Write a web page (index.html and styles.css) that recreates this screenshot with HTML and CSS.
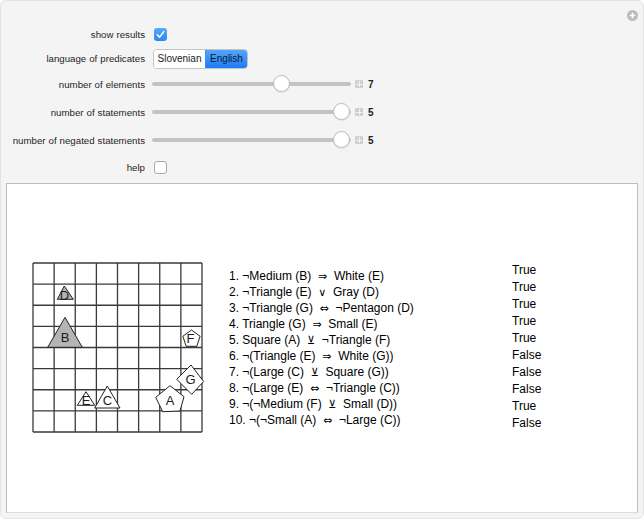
FILE: index.html
```html
<!DOCTYPE html>
<html>
<head>
<meta charset="utf-8">
<link rel="stylesheet" href="styles.css">
</head>
<body>
<div class="panel">
  <div class="add-btn"><svg width="11" height="11" viewBox="0 0 11 11"><circle cx="5.5" cy="5.5" r="5.5" fill="#bdbdbd"/><path d="M5.5 2.8v5.4M2.8 5.5h5.4" stroke="#fff" stroke-width="1.6"/></svg></div>
  <div class="controls">
    <div class="row r1">
      <div class="label">show results</div>
      <div class="check on"><svg width="13" height="13" viewBox="0 0 13 13"><path d="M3.3 6.8l2.2 2.4 4.3-5.6" fill="none" stroke="#fff" stroke-width="1.4" stroke-linecap="round" stroke-linejoin="round"/></svg></div>
    </div>
    <div class="row r2">
      <div class="label">language of predicates</div>
      <div class="seg">
        <div class="seg-item">Slovenian</div>
        <div class="seg-item active">English</div>
      </div>
    </div>
    <div class="row r3">
      <div class="label">number of elements</div>
      <div class="slider"><div class="track"></div><div class="thumb" style="left:121px"></div></div>
      <div class="plus"></div>
      <div class="val">7</div>
    </div>
    <div class="row r4">
      <div class="label">number of statements</div>
      <div class="slider"><div class="track"></div><div class="thumb" style="left:181px"></div></div>
      <div class="plus"></div>
      <div class="val">5</div>
    </div>
    <div class="row r5">
      <div class="label">number of negated statements</div>
      <div class="slider"><div class="track"></div><div class="thumb" style="left:181px"></div></div>
      <div class="plus"></div>
      <div class="val">5</div>
    </div>
    <div class="row r6">
      <div class="label">help</div>
      <div class="check"></div>
    </div>
  </div>
  <div class="output">
    <svg class="board" width="182" height="182" viewBox="0 0 182 182">
      <g stroke="#3a3a3a" stroke-width="1.3" fill="none">
        <path d="M5 5V174M26.125 5V174M47.25 5V174M68.375 5V174M89.5 5V174M110.625 5V174M131.75 5V174M152.875 5V174M174 5V174"/>
        <path d="M5 5H174M5 26.125H174M5 47.25H174M5 68.375H174M5 89.5H174M5 110.625H174M5 131.75H174M5 152.875H174M5 174H174"/>
      </g>
      <g stroke="#222" stroke-width="1" stroke-linejoin="round">
        <polygon points="36.3,28 29.3,41.3 45.3,41.3" fill="#b4b4b4"/>
        <polygon points="37,59.3 19.7,89.3 54.3,89.3" fill="#b4b4b4"/>
        <polygon points="163.5,72 172.1,78.2 168.8,88.3 158.2,88.3 154.9,78.2" fill="#fff"/>
        <polygon points="163,107 175.6,123.5 163.7,136.3 148.7,121.3" fill="#fff"/>
        <polygon points="142,127.7 156,138.7 152,153 134.7,153.7 127.7,139.3" fill="#fff"/>
        <polygon points="79.3,128 66.7,150 92,150" fill="#fff"/>
        <polygon points="58,133.7 49.3,147.3 66.7,147.3" fill="#fff"/>
      </g>
      <g class="lbl" text-anchor="middle">
        <text x="36.5" y="41.5">D</text>
        <text x="37" y="83.8">B</text>
        <text x="162.5" y="85">F</text>
        <text x="162.5" y="126">G</text>
        <text x="142" y="146.5">A</text>
        <text x="79.5" y="147.2">C</text>
        <text x="58" y="147.2">E</text>
      </g>
    </svg>
    <div class="statements">
      <div class="st">1. ¬Medium (B)  <span class="op">⇒</span>  White (E)</div>
      <div class="st">2. ¬Triangle (E)  <span class="op">∨</span>  Gray (D)</div>
      <div class="st">3. ¬Triangle (G)  <span class="op">⇔</span>  ¬Pentagon (D)</div>
      <div class="st">4. Triangle (G)  <span class="op">⇒</span>  Small (E)</div>
      <div class="st">5. Square (A)  <span class="op">⊻</span>  ¬Triangle (F)</div>
      <div class="st">6. ¬(Triangle (E)  <span class="op">⇒</span>  White (G))</div>
      <div class="st">7. ¬(Large (C)  <span class="op">⊻</span>  Square (G))</div>
      <div class="st">8. ¬(Large (E)  <span class="op">⇔</span>  ¬Triangle (C))</div>
      <div class="st">9. ¬(¬Medium (F)  <span class="op">⊻</span>  Small (D))</div>
      <div class="st">10. ¬(¬Small (A)  <span class="op">⇔</span>  ¬Large (C))</div>
    </div>
    <div class="values">
      <div>True</div>
      <div>True</div>
      <div>True</div>
      <div>True</div>
      <div>True</div>
      <div>False</div>
      <div>False</div>
      <div>False</div>
      <div>True</div>
      <div>False</div>
    </div>
  </div>
</div>
</body>
</html>
```
FILE: styles.css
```css
html, body {
  margin: 0;
  padding: 0;
  background: #ffffff;
}
.panel {
  position: relative;
  box-sizing: border-box;
  width: 644px;
  height: 519px;
  background: #f4f4f4;
  border: 1px solid #e3e3e3;
  border-radius: 6px;
  font-family: "Liberation Sans", Arial, sans-serif;
}
.add-btn {
  position: absolute;
  top: 9px;
  right: 5px;
  width: 11px;
  height: 11px;
}
.add-btn svg { display: block; }
.controls {
  padding-top: 19px;
  display: flex;
  flex-direction: column;
}
.row {
  display: flex;
  align-items: center;
}
.r1 { height: 28px; }
.r2 { height: 21px; }
.r3 { height: 30px; }
.r4 { height: 26px; }
.r5 { height: 30px; }
.r6 { height: 24px; }
.label {
  flex: none;
  width: 144px;
  text-align: right;
  white-space: nowrap;
  font-size: 9.7px;
  color: #1e1e1e;
  word-spacing: 0.3px;
}
.check {
  box-sizing: border-box;
  width: 13px;
  height: 13px;
  margin-left: 9px;
  border-radius: 3px;
  border: 1px solid #a9a9a9;
  background: #fff;
}
.check.on {
  border: none;
  background: linear-gradient(#5aa8fa, #2d86f2);
}
.check svg { display: block; }
.seg {
  display: flex;
  margin-left: 8px;
  height: 20px;
  box-sizing: border-box;
  border: 1px solid #c4c4c4;
  border-radius: 4px;
  overflow: hidden;
  font-size: 10px;
}
.seg-item {
  display: flex;
  align-items: center;
  justify-content: center;
  width: 51px;
  background: #fff;
  color: #1a1a1a;
}
.seg-item.active {
  width: 41px;
  background: linear-gradient(#55a6fb, #1c7cf4);
  color: #0b1a33;
  border-left: 1px solid #3c8ef0;
}
.slider {
  position: relative;
  width: 199px;
  height: 18px;
  margin-left: 7px;
}
.track {
  position: absolute;
  left: 0;
  right: 0;
  top: 7px;
  height: 4px;
  border-radius: 2px;
  background: #c3c3c3;
}
.thumb {
  position: absolute;
  top: 0;
  box-sizing: border-box;
  width: 17px;
  height: 17px;
  border-radius: 50%;
  background: #fff;
  border: 1px solid #b9b9b9;
  box-shadow: 0 1px 1px rgba(0,0,0,0.08);
}
.plus {
  position: relative;
  width: 8px;
  height: 8px;
  margin-left: 4px;
  background: #cfcfcf;
  border-radius: 1px;
}
.plus::before, .plus::after {
  content: "";
  position: absolute;
  background: #f4f4f4;
}
.plus::before { left: 1px; right: 1px; top: 3.5px; height: 1px; }
.plus::after { top: 1px; bottom: 1px; left: 3.5px; width: 1px; }
.val {
  margin-left: 5px;
  font-size: 10px;
  font-weight: bold;
  color: #222;
}
.output {
  box-sizing: border-box;
  margin: 4px 5px 0 5px;
  width: 632px;
  height: 330px;
  background: #fff;
  border: 1px solid #bdbdbd;
  border-bottom-color: #dcdcdc;
  display: flex;
  align-items: flex-start;
}
.board {
  display: block;
  margin-left: 21px;
  margin-top: 74px;
  flex: none;
}
.lbl text {
  font-family: "Liberation Sans", Arial, sans-serif;
  font-size: 13px;
  fill: #1c1c1c;
}
.statements {
  width: 283px;
  margin-left: 19px;
  margin-top: 84px;
  font-size: 12px;
  line-height: 16px;
  color: #000;
  font-family: "Liberation Sans", "DejaVu Sans", sans-serif;
}
.st {
  white-space: pre;
}
.op {
  font-family: "DejaVu Sans", sans-serif;
  font-size: 11px;
  line-height: 10px;
}
.values {
  margin-left: 0;
  margin-top: 78px;
  font-size: 12px;
  line-height: 17px;
  color: #000;
}
```
